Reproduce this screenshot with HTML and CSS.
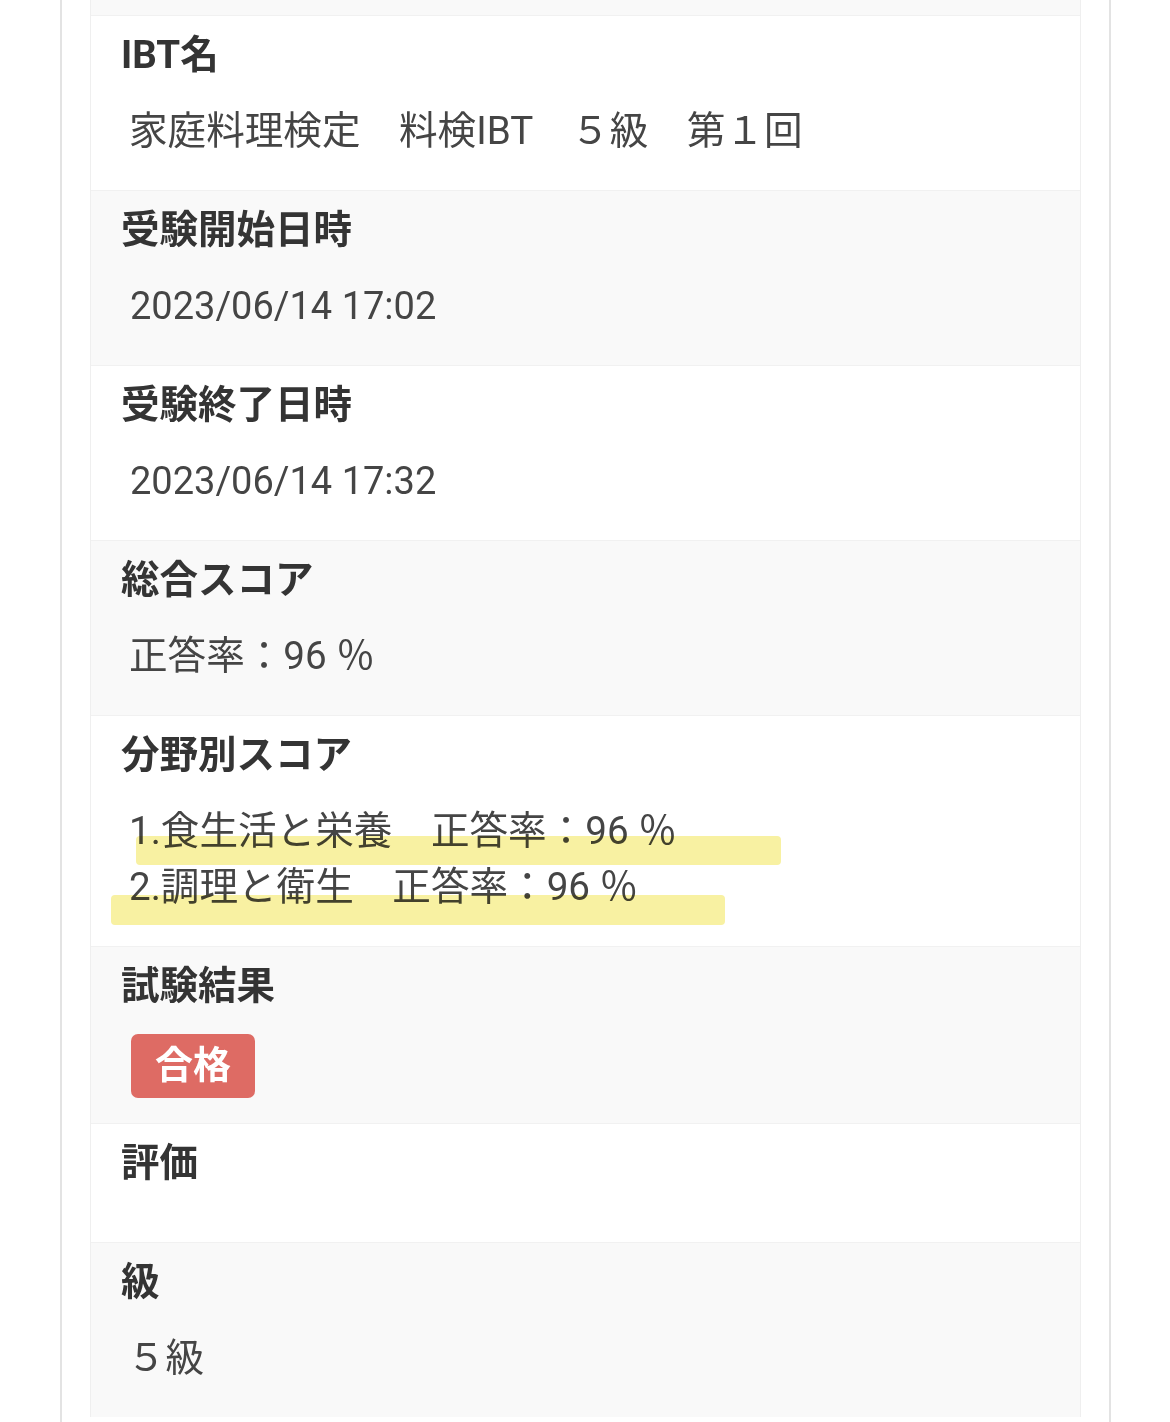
FILE: index.html
```html
<!DOCTYPE html>
<html lang="ja">
<head>
<meta charset="utf-8">
<title>受験結果</title>
<link rel="stylesheet" href="styles.css">
</head>
<body>
<div class="panel">
  <dl class="detail">
    <div class="row row-cut"></div>
    <div class="row">
      <dt class="label">IBT名</dt>
      <dd class="value value-cjk">家庭料理検定　料検IBT　５級　第１回</dd>
    </div>
    <div class="row row-alt">
      <dt class="label">受験開始日時</dt>
      <dd class="value">2023/06/14 17:02</dd>
    </div>
    <div class="row">
      <dt class="label">受験終了日時</dt>
      <dd class="value">2023/06/14 17:32</dd>
    </div>
    <div class="row row-alt">
      <dt class="label">総合スコア</dt>
      <dd class="value value-cjk">正答率：96 ％</dd>
    </div>
    <div class="row">
      <dt class="label">分野別スコア</dt>
      <dd class="value value-cjk score-list">
        <div class="score-line">1.食生活と栄養　正答率：96 ％</div>
        <div class="score-line">2.調理と衛生　正答率：96 ％</div>
        <span class="marker marker-1"></span>
        <span class="marker marker-2"></span>
      </dd>
    </div>
    <div class="row row-alt">
      <dt class="label">試験結果</dt>
      <dd class="value value-badge"><span class="badge">合格</span></dd>
    </div>
    <div class="row">
      <dt class="label">評価</dt>
      <dd class="value value-empty"></dd>
    </div>
    <div class="row row-alt">
      <dt class="label">級</dt>
      <dd class="value value-cjk value-grade">５級</dd>
    </div>
  </dl>
</div>
</body>
</html>
```

FILE: styles.css
```css
html, body {
  margin: 0;
  padding: 0;
  background: #ffffff;
}

body {
  font-family: Roboto, "Noto Sans CJK JP", "Noto Sans", sans-serif;
  color: #333333;
}

.panel {
  margin-left: 60px;
  width: 1051px;
  min-height: 1422px;
  box-sizing: border-box;
  border-left: 2px solid #e3e3e3;
  border-right: 2px solid #e3e3e3;
  padding: 0 28px;
}

.detail {
  margin: 0;
  border-left: 1px solid #efefef;
  border-right: 1px solid #efefef;
}

.row {
  display: flex;
  flex-direction: column;
  padding: 15px 0 31px 30px;
  border-top: 1px solid #f1f1f1;
  background: #ffffff;
  box-sizing: border-box;
}

.row:first-child {
  border-top: none;
}

.row-alt {
  background: #f9f9f9;
}

.row-cut {
  height: 15px;
  padding: 0;
  background: #f9f9f9;
}

.label {
  margin: 0 0 24px 0;
  font-size: 38.5px;
  line-height: 48px;
  font-weight: 700;
  color: #343434;
}

.value {
  margin: 0;
  padding-left: 9px;
  font-size: 38px;
  line-height: 56px;
  font-weight: 400;
  color: #454545;
}

.value-cjk {
  font-size: 38.6px;
  padding-left: 8px;
}

.value-empty {
  height: 0;
}

.value-grade {
  padding-left: 6px;
}

.value-badge {
  height: 58px;
  padding-left: 10px;
}

.badge {
  display: inline-block;
  height: 64px;
  line-height: 62px;
  padding: 0 24px;
  border-radius: 7px;
  background: #de6b64;
  color: #ffffff;
  font-weight: 700;
  font-size: 38px;
}

.score-list {
  position: relative;
}

.score-line {
  white-space: nowrap;
}

.marker {
  position: absolute;
  display: block;
  background: #f8f1a2;
  mix-blend-mode: multiply;
  border-radius: 4px;
  filter: blur(0.6px);
}

.marker-1 {
  left: 15px;
  top: 33px;
  width: 645px;
  height: 29px;
}

.marker-2 {
  left: -10px;
  top: 92px;
  width: 614px;
  height: 30px;
}
```
